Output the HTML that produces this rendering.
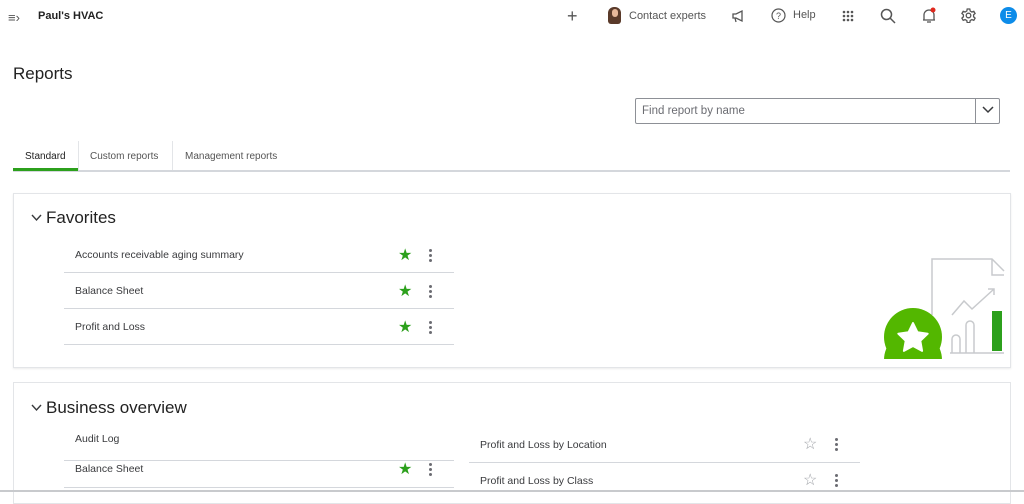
<!DOCTYPE html><html><head><style>
body{margin:0;width:1024px;height:492px;overflow:hidden;background:#fff;font-family:"Liberation Sans",sans-serif;color:#393a3d;position:relative}
.a{position:absolute;white-space:nowrap}
.s{font-size:10.5px;color:#393a3d}
.line{position:absolute;height:1px;background:#d4d7dc}
.star{position:absolute;font-size:16px;line-height:15px}
.dots{position:absolute;width:3px}
.dots i{display:block;width:3px;height:3px;border-radius:50%;background:#6b6c72;margin-bottom:2px}
</style></head><body>
<div class="a" style="left:8px;top:10px;font-size:13px;color:#555">&#8801;&#8250;</div>
<div class="a" style="left:38px;top:10px;font-size:11px;font-weight:bold;color:#222">Paul's HVAC</div>
<div class="a" style="left:567px;top:6px;font-size:18px;color:#555">+</div>
<div class="a" style="left:608px;top:7px;width:13px;height:17px;border-radius:6px 6px 3px 3px;background:#5a3a2a"></div>
<div class="a" style="left:612px;top:9px;width:6px;height:8px;border-radius:3px;background:#e8b89a"></div>
<div class="a" style="left:629px;top:10px;font-size:11px;color:#555">Contact experts</div>
<svg class="a" style="left:731px;top:9px" width="14" height="14" viewBox="0 0 14 14" fill="none" stroke="#555" stroke-width="1.3"><path d="M2 5h3l6-3v10l-6-3H2z M4 9l1 4"/></svg>
<svg class="a" style="left:771px;top:8px" width="15" height="15" viewBox="0 0 15 15"><circle cx="7.5" cy="7.5" r="6.5" fill="none" stroke="#555" stroke-width="1.2"/><text x="7.5" y="11" font-size="9" text-anchor="middle" fill="#555" font-family="Liberation Sans">?</text></svg>
<div class="a" style="left:793px;top:9px;font-size:11px;color:#555">Help</div>
<svg class="a" style="left:842px;top:10px" width="12" height="12"><g fill="#555"><circle cx="2" cy="2" r="1.3"/><circle cx="6" cy="2" r="1.3"/><circle cx="10" cy="2" r="1.3"/><circle cx="2" cy="6" r="1.3"/><circle cx="6" cy="6" r="1.3"/><circle cx="10" cy="6" r="1.3"/><circle cx="2" cy="10" r="1.3"/><circle cx="6" cy="10" r="1.3"/><circle cx="10" cy="10" r="1.3"/></g></svg>
<svg class="a" style="left:880px;top:8px" width="16" height="16" fill="none" stroke="#555" stroke-width="1.5"><circle cx="6.5" cy="6.5" r="5"/><path d="M10 10l5 5"/></svg>
<svg class="a" style="left:921px;top:7px" width="16" height="17" fill="none" stroke="#555" stroke-width="1.3"><path d="M3 13V8a5 5 0 0 1 10 0v5H2h12M6 15h4"/><circle cx="12" cy="3" r="2.5" fill="#e0281d" stroke="none"/></svg>
<svg class="a" style="left:961px;top:8px" width="15" height="15" fill="none" stroke="#555" stroke-width="1.3"><circle cx="7.5" cy="7.5" r="2.3"/><path d="M6.2 1h2.6l.4 2 1.7 1 1.9-.7 1.3 2.2-1.5 1.3v2l1.5 1.3-1.3 2.2-1.9-.7-1.7 1-.4 2H6.2l-.4-2-1.7-1-1.9.7-1.3-2.2 1.5-1.3v-2L.9 5.5l1.3-2.2 1.9.7 1.7-1z"/></svg>
<div class="a" style="left:1000px;top:7px;width:17px;height:17px;border-radius:50%;background:#0d8ce9;color:#fff;font-size:10px;text-align:center;line-height:17px">E</div>
<div class="a" style="left:13px;top:64px;font-size:17px;color:#222">Reports</div>
<div class="a" style="left:635px;top:98px;width:363px;height:24px;border:1px solid #8d9096;border-radius:2px"></div>
<div class="a" style="left:642px;top:105px;font-size:11.5px;color:#6b6c72">Find report by name</div>
<div class="a" style="left:975px;top:99px;width:1px;height:24px;background:#8d9096"></div>
<svg class="a" style="left:982px;top:106px" width="12" height="8" fill="none" stroke="#393a3d" stroke-width="1.5"><path d="M1 1l5 5 5-5"/></svg>
<div class="a" style="left:25px;top:151px;font-size:10px;color:#222">Standard</div>
<div class="a" style="left:90px;top:151px;font-size:10px;color:#555">Custom reports</div>
<div class="a" style="left:185px;top:151px;font-size:10px;color:#555">Management reports</div>
<div class="a" style="left:78px;top:141px;width:1px;height:29px;background:#e3e5e8"></div>
<div class="a" style="left:172px;top:141px;width:1px;height:29px;background:#e3e5e8"></div>
<div class="a" style="left:13px;top:170px;width:997px;height:2px;background:#d4d7dc"></div>
<div class="a" style="left:13px;top:168px;width:65px;height:3px;background:#2ca01c"></div>
<div class="a" style="left:13px;top:193px;width:996px;height:173px;border:1px solid #e3e5e8;box-shadow:0 1px 2px rgba(0,0,0,.08)"></div>
<svg class="a" style="left:31px;top:214px" width="11" height="8" fill="none" stroke="#393a3d" stroke-width="1.4"><path d="M1 1l4.5 5L10 1"/></svg>
<div class="a" style="left:46px;top:208px;font-size:17px;color:#222">Favorites</div>
<div class="a s" style="left:75px;top:249px">Accounts receivable aging summary</div>
<div class="a s" style="left:75px;top:285px">Balance Sheet</div>
<div class="a s" style="left:75px;top:321px">Profit and Loss</div>
<div class="line" style="left:64px;top:272px;width:390px"></div>
<div class="line" style="left:64px;top:308px;width:390px"></div>
<div class="line" style="left:64px;top:344px;width:390px"></div>
<div class="star" style="left:398px;top:248px;color:#2ca01c">★</div>
<div class="star" style="left:398px;top:284px;color:#2ca01c">★</div>
<div class="star" style="left:398px;top:320px;color:#2ca01c">★</div>
<div class="dots" style="left:429px;top:249px"><i></i><i></i><i></i></div>
<div class="dots" style="left:429px;top:285px"><i></i><i></i><i></i></div>
<div class="dots" style="left:429px;top:321px"><i></i><i></i><i></i></div>
<svg class="a" style="left:880px;top:255px" width="130" height="105" viewBox="0 0 130 105" fill="none" stroke="#c8cacd" stroke-width="1.5">
<path d="M52 60V4h60l12 12"/><path d="M112 4v16h12"/>
<path d="M72 60l12-14 8 8 22-20M108 34h6v6"/>
<path d="M72 98V84a4 4 0 0 1 8 0v14M86 98V70a4 4 0 0 1 8 0v28M70 98h54"/>
<rect x="112" y="56" width="10" height="40" fill="#2ca01c" stroke="none"/>
<path d="M4 105a29 29 0 0 1 58 0z" fill="#53b700" stroke="none"/>
<circle cx="33" cy="82" r="29" fill="#53b700" stroke="none"/>
<path d="M33 68l4.5 9.3 10.2 1.4-7.4 7.1 1.8 10.1L33 91l-9.1 4.9 1.8-10.1-7.4-7.1 10.2-1.4z" fill="#fff" stroke="#fff" stroke-linejoin="round" stroke-width="2"/>
</svg>
<div class="a" style="left:870px;top:359px;width:140px;height:8px;background:#fff"></div>
<div class="a" style="left:13px;top:382px;width:996px;height:120px;border:1px solid #e3e5e8"></div>
<svg class="a" style="left:31px;top:404px" width="11" height="8" fill="none" stroke="#393a3d" stroke-width="1.4"><path d="M1 1l4.5 5L10 1"/></svg>
<div class="a" style="left:46px;top:398px;font-size:17px;color:#222">Business overview</div>
<div class="a s" style="left:75px;top:433px">Audit Log</div>
<div class="a s" style="left:75px;top:463px">Balance Sheet</div>
<div class="line" style="left:64px;top:460px;width:390px"></div>
<div class="line" style="left:64px;top:487px;width:390px"></div>
<div class="star" style="left:398px;top:462px;color:#2ca01c">★</div>
<div class="dots" style="left:429px;top:463px"><i></i><i></i><i></i></div>
<div class="a s" style="left:480px;top:439px">Profit and Loss by Location</div>
<div class="a s" style="left:480px;top:475px">Profit and Loss by Class</div>
<div class="line" style="left:469px;top:462px;width:391px"></div>
<div class="star" style="left:803px;top:437px;color:#a0a3a8">☆</div>
<div class="star" style="left:803px;top:473px;color:#a0a3a8">☆</div>
<div class="dots" style="left:835px;top:438px"><i></i><i></i><i></i></div>
<div class="dots" style="left:835px;top:474px"><i></i><i></i><i></i></div>
<div class="a" style="left:0;top:490px;width:1024px;height:2px;background:#c8cacd"></div>
</body></html>
